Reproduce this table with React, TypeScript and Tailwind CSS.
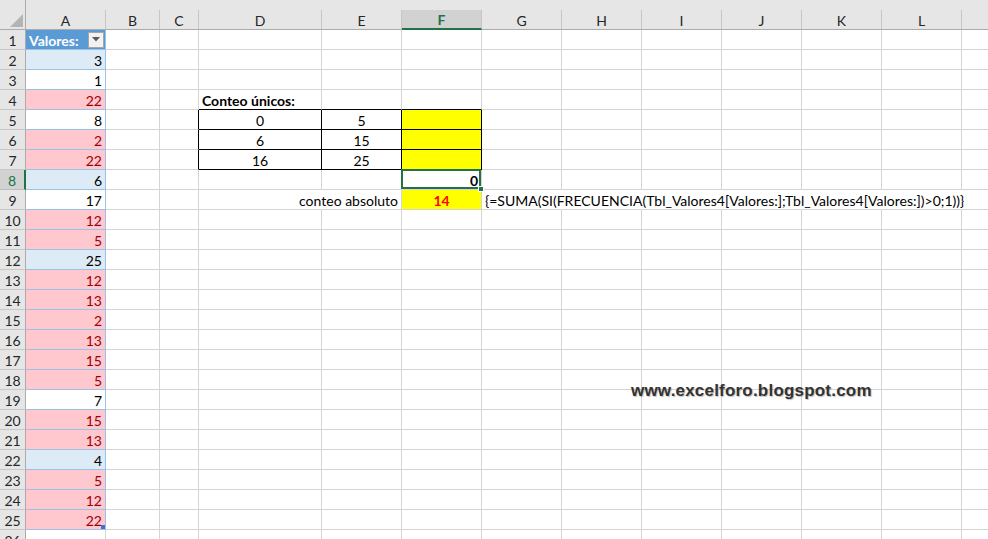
import React from 'react';

const colWidths = [26, 80, 54, 39, 123, 80, 80, 80, 80, 80, 80, 80, 80, 80];
const colNames = ['', 'A', 'B', 'C', 'D', 'E', 'F', 'G', 'H', 'I', 'J', 'K', 'L', ''];

// valores de la tabla (A2:A25), dup = formato condicional de duplicados
const valores: { v: number; dup: boolean }[] = [
  { v: 3, dup: false },
  { v: 1, dup: false },
  { v: 22, dup: true },
  { v: 8, dup: false },
  { v: 2, dup: true },
  { v: 22, dup: true },
  { v: 6, dup: false },
  { v: 17, dup: false },
  { v: 12, dup: true },
  { v: 5, dup: true },
  { v: 25, dup: false },
  { v: 12, dup: true },
  { v: 13, dup: true },
  { v: 2, dup: true },
  { v: 13, dup: true },
  { v: 15, dup: true },
  { v: 5, dup: true },
  { v: 7, dup: false },
  { v: 15, dup: true },
  { v: 13, dup: true },
  { v: 4, dup: false },
  { v: 5, dup: true },
  { v: 12, dup: true },
  { v: 22, dup: true },
];

const tramos = [
  ['0', '5'],
  ['6', '15'],
  ['16', '25'],
];

const gridCols = 'grid grid-cols-[26px_80px_54px_39px_123px_80px_80px_80px_80px_80px_80px_80px_80px_80px]';

function Cell({ row, col }: { row: number; col: number }) {
  let cls = 'relative h-[20px] border-b border-r border-[#d4d4d4] flex items-center pt-[3px] px-[3px] whitespace-nowrap';
  let content: React.ReactNode = null;

  if (col === 0) {
    const sel = row === 8;
    cls = `h-[20px] border-b flex items-center justify-center pt-[3px] ${
      sel
        ? 'bg-[#d2d2d2] text-[#217346] border-r-2 border-r-[#217346] border-b-[#bdbdbd]'
        : 'bg-[#e6e6e6] text-[#262626] border-r border-r-[#ababab] border-b-[#c8c8c8]'
    }`;
    return <div className={cls}>{row}</div>;
  }

  // columna A: tabla
  if (col === 1 && row >= 1 && row <= 25) {
    if (row === 1) {
      return (
        <div className="h-[20px] bg-[#5b9bd5] border-b border-r border-[#9bc2e6] flex items-center justify-between pl-[3px] pr-[1px] text-white font-bold">
          <span className="pt-[3px]">Valores:</span>
          <span className="w-[16px] h-[16px] bg-[#f2f2f2] border border-[#a6a6a6] flex items-center justify-center">
            <svg width="8" height="5" viewBox="0 0 8 5">
              <path d="M0 0h8L4 4.5z" fill="#595959" />
            </svg>
          </span>
        </div>
      );
    }
    const d = valores[row - 2];
    const bg = d.dup ? 'bg-[#ffc7ce] text-[#9c0006]' : row % 2 === 0 ? 'bg-[#ddebf7] text-black' : 'bg-white text-black';
    return (
      <div className={`relative h-[20px] border-b border-r border-[#9bc2e6] flex items-center justify-end pt-[3px] px-[3px] ${bg}`}>
        {d.v}
        {row === 25 && <span className="absolute right-0 bottom-0 w-[4px] h-[4px] bg-[#4472c4]" />}
      </div>
    );
  }

  if (row === 4 && col === 4) {
    content = <span className="font-bold text-black">Conteo únicos:</span>;
  }
  if (row === 4 && col >= 4 && col <= 6) cls += ' border-b-black';
  if (row >= 5 && row <= 7) {
    if (col === 3) cls += ' border-r-black';
    if (col >= 4 && col <= 6) {
      cls += ' border-r-black border-b-black';
      if (col === 6) cls += ' bg-[#ffff00]';
      else {
        cls += ' justify-center';
        content = tramos[row - 5][col - 4];
      }
    }
  }
  if (row === 8 && col === 6) {
    cls += ' justify-end font-bold';
    content = (
      <>
        0
        <span className="absolute -left-[1px] -top-[1px] right-0 bottom-0 border-2 border-[#217346]" />
        <span className="absolute -right-[3px] -bottom-[3px] w-[6px] h-[6px] bg-[#217346] border border-white z-10" />
      </>
    );
  }
  if (row === 9) {
    if (col === 4) cls += ' border-r-transparent';
    if (col === 5) {
      cls += ' justify-end';
      content = <span className="text-black">conteo absoluto</span>;
    }
    if (col === 6) {
      cls += ' bg-[#ffff00] justify-center font-bold text-[#ff0000]';
      content = '14';
    }
    if (col >= 7 && col <= 12) cls += ' border-r-transparent';
    if (col === 7) {
      content = (
        <span className="text-black">{'{=SUMA(SI(FRECUENCIA(Tbl_Valores4[Valores:];Tbl_Valores4[Valores:])>0;1))}'}</span>
      );
    }
  }

  return <div className={cls}>{content}</div>;
}

export default function App() {
  const rows = Array.from({ length: 26 }, (_, i) => i + 1);
  return (
    <div
      className="relative w-[988px] h-[539px] overflow-hidden bg-white text-[14px] leading-none text-black"
      style={{ fontFamily: 'Lato, "Open Sans", sans-serif' }}
    >
      <div className="w-[1042px]">
        <div className="h-[10px] bg-[#e6e6e6]" />
        <div className={gridCols}>
          {colNames.map((name, i) => {
            if (i === 0) {
              return (
                <div key={i} className="bg-[#e6e6e6] border-r border-b border-[#ababab] -mt-[10px] h-[30px] flex items-end justify-end pr-[2px] pb-[2px]">
                  <svg width="13" height="13" viewBox="0 0 13 13">
                    <path d="M13 0V13H0z" fill="#b4b4b4" />
                  </svg>
                </div>
              );
            }
            const sel = name === 'F';
            return (
              <div
                key={i}
                className={`h-[20px] flex items-center justify-center pt-[2px] border-r border-r-[#c6c6c6] ${
                  sel
                    ? 'bg-[#d2d2d2] text-[#217346] border-b-2 border-b-[#217346] font-bold'
                    : 'bg-[#e6e6e6] text-[#262626] border-b border-b-[#ababab]'
                }`}
              >
                {name}
              </div>
            );
          })}
        </div>
        {rows.map((r) => (
          <div key={r} className={gridCols}>
            {colWidths.map((_, c) => (
              <Cell key={c} row={r} col={c} />
            ))}
          </div>
        ))}
      </div>
      <div
        className="absolute left-[631px] top-[382px] text-[17px] font-bold text-[#333333] tracking-[0.2px]"
        style={{ fontFamily: '"Liberation Sans", Arial, sans-serif', textShadow: '1px 1px 1px rgba(0,0,0,0.25)' }}
      >
        www.excelforo.blogspot.com
      </div>
    </div>
  );
}
